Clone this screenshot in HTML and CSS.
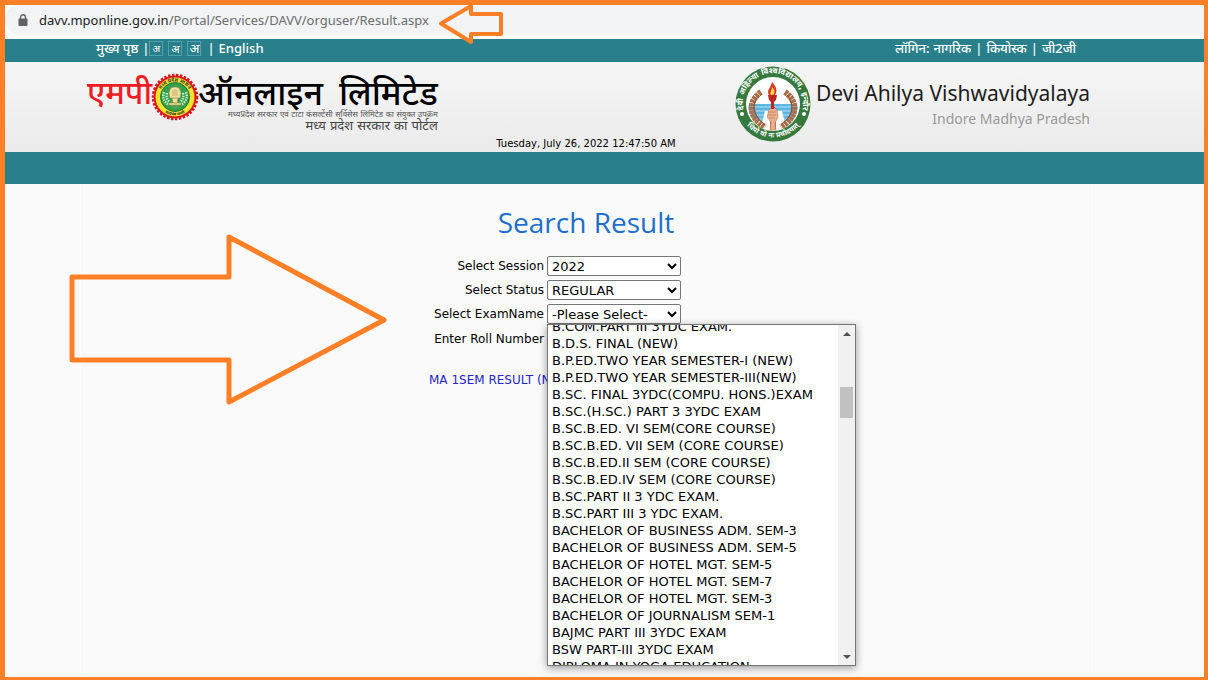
FILE: index.html
```
<!DOCTYPE html>
<html lang="en">
  <head>
    <meta charset="UTF-8">
    <title>Search Result</title>
    <link rel="stylesheet" href="styles.css">
  </head>
  <body>
    <!-- address bar -->
    <div class="address-bar">
      <svg class="lock" width="10" height="12" viewBox="0 0 10 12">
        <path d="M2.5 5V3.2a2.5 2.5 0 0 1 5 0V5" fill="none" stroke="#5f6368" stroke-width="1.4"/>
        <rect x="0.5" y="4.5" width="9" height="7.5" rx="1" fill="#5f6368"/>
      </svg>
      <div class="url">davv.mponline.gov.in<span>/Portal/Services/DAVV/orguser/Result.aspx</span></div>
    </div>

    <!-- language and login links -->
    <div class="top-bar">
      <div class="container top-links">
        <div class="link-group">
          <a href="#" lang="hi">मुख्य पृष्ठ</a>
          <span>|</span>
          <div class="text-sizes">
            <button class="size-button small">अ</button>
            <button class="size-button medium">अ</button>
            <button class="size-button large">अ</button>
          </div>
          <span>|</span>
          <a href="#">English</a>
        </div>
        <div class="link-group login" lang="hi">
          <span>लॉगिन:</span>
          <a href="#">नागरिक</a>
          <span>|</span>
          <a href="#">कियोस्क</a>
          <span>|</span>
          <a href="#">जी2जी</a>
        </div>
      </div>
    </div>

    <header class="header">
      <div class="container brands">
        <div class="portal" lang="hi">
          <div class="portal-name">
            <span class="red">एमपी</span>
            <svg class="emblem" width="48" height="48" viewBox="0 0 48 48">
              <circle cx="24" cy="24" r="21.5" fill="#e0161f"/>
              <circle cx="24" cy="24" r="22" fill="none" stroke="#d8141c" stroke-width="2.6" stroke-dasharray="2.4 1.6"/>
              <circle cx="24" cy="24" r="19.5" fill="#f3e32c"/>
              <path id="emblem-top" d="M8.500 24a15.500 15.500 0 0 1 31 0" fill="none"/>
              <path id="emblem-bottom" d="M5.500 24a18.500 18.500 0 0 0 37 0" fill="none"/>
              <text font-size="5" font-weight="bold" fill="#333"><textPath href="#emblem-top" startOffset="50%" text-anchor="middle">मध्य प्रदेश शासन</textPath></text>
              <text font-size="4" font-weight="bold" fill="#333"><textPath href="#emblem-bottom" startOffset="50%" text-anchor="middle">सत्यमेव जयते</textPath></text>
              <circle cx="24" cy="24" r="14.500" fill="#35a04a" stroke="#1d7a32"/>
              <g fill="none" stroke="#c9eccb" stroke-width="2.400" stroke-dasharray="1.5 1">
                <path d="M13 19c-2 5 0 10 5 13M35 19c2 5 0 10-5 13M16 20c-1 4 0 7 3 9M32 20c1 4 0 7-3 9"/>
              </g>
              <path d="M19 17c0-4 10-4 10 0l1 3-1 5H19l-1-5zM21 25h6l-1 5h-4zM18 30h12v2H18z" fill="#f0dfa1" stroke="#a08d45" stroke-width=".5"/>
              <path d="M22 17v6M24 16v7M26 17v6M20 34h8" stroke="#b39b4d" stroke-width=".7"/>
            </svg>
            <span>ऑनलाइन</span>
            <span class="last-word">लिमिटेड</span>
          </div>
          <div class="portal-note">मध्यप्रदेश सरकार एवं टाटा कंसल्टेंसी सर्विसेस लिमिटेड का संयुक्त उपक्रम</div>
          <div class="portal-tag">मध्य प्रदेश सरकार का पोर्टल</div>
        </div>

        <div class="university">
          <svg class="seal" width="76" height="76" viewBox="0 0 76 76">
            <circle cx="38" cy="38" r="37.500" fill="#36793f"/>
            <circle cx="38" cy="38" r="27" fill="#fff"/>
            <path id="seal-top" d="M9 45A30 30 0 1 1 67 45" fill="none"/>
            <path id="seal-bottom" d="M8 54A34.500 34.500 0 0 0 68 54" fill="none"/>
            <text font-size="8" font-weight="bold" fill="#fff"><textPath href="#seal-top" startOffset="50%" text-anchor="middle">देवी अहिल्या विश्वविद्यालय, इन्दौर</textPath></text>
            <text font-size="7" font-weight="bold" fill="#fff"><textPath href="#seal-bottom" startOffset="50%" text-anchor="middle">धियो यो नः प्रचोदयात्</textPath></text>
            <circle cx="7" cy="48" r="2" fill="#fff"/>
            <circle cx="69" cy="48" r="2" fill="#fff"/>
            <path d="M14 38h48q2 9-6 17H20q-8-8-6-17z" fill="#5cb5e2"/>
            <path d="M16 41h44M15 45h46M16 49h44M18 53h40" stroke="#b5def2" stroke-width="1"/>
            <path d="M27 57l3-12q5-1 8 2 4-3 9-2l3 12q-7-3-12 1-4-4-11-1z" fill="#fff"/>
            <g fill="none" stroke="#a96e49">
              <path d="M26 26C12 36 14 52 30 61M50 26c14 10 12 26-4 35" stroke-width="6" stroke-dasharray="3 .6"/>
              <path d="M24 29C16 38 18 50 30 59M52 29c8 9 6 21-6 30" stroke="#865133" stroke-width="1"/>
            </g>
            <path d="M36 41h4l1 22h-6z" fill="#b62b22"/>
            <path d="M34 44q4-5 8 0l1 7-3 6 1 7h-6l1-8-4-5z" fill="#e9b08b" stroke="#b87355" stroke-width=".6"/>
            <path d="M33 46h8M33 49h8M34 52h6" stroke="#b87355" stroke-width=".6"/>
            <path d="M33 29h9l-1 5-2 2v7h-3v-7l-2-2z" fill="#bd2521"/>
            <path d="M34 29c-3-5 2-7 3-13 4 4 6 9 3 13z" fill="#dc3924"/>
            <path d="M36 29c-2-3 1-4 1-8 3 3 3 6 1 8z" fill="#ffd44b"/>
          </svg>
          <div class="university-text">
            <div class="university-name">Devi Ahilya Vishwavidyalaya</div>
            <div class="university-place">Indore Madhya Pradesh</div>
          </div>
        </div>
      </div>
      <div class="container date">Tuesday, July 26, 2022 12:47:50 AM</div>
    </header>
    <nav class="menu-bar"></nav>

    <main class="container content">
      <h1>Search Result</h1>
      <form class="search-form">
        <label for="session">Select Session</label>
        <select id="session"><option>2022</option></select>

        <label for="status">Select Status</label>
        <select id="status"><option>REGULAR</option></select>

        <label for="exam">Select ExamName</label>
        <div class="exam-field">
          <select id="exam"><option>-Please Select-</option></select>
          <!-- opened exam list -->
          <div class="exam-popup">
            <ul class="exam-list" role="listbox" aria-label="Exam names">
              <li role="option">B.COM.PART III 3YDC EXAM.</li>
              <li role="option">B.D.S. FINAL (NEW)</li>
              <li role="option">B.P.ED.TWO YEAR SEMESTER-I (NEW)</li>
              <li role="option">B.P.ED.TWO YEAR SEMESTER-III(NEW)</li>
              <li role="option">B.SC. FINAL 3YDC(COMPU. HONS.)EXAM</li>
              <li role="option">B.SC.(H.SC.) PART 3 3YDC EXAM</li>
              <li role="option">B.SC.B.ED. VI SEM(CORE COURSE)</li>
              <li role="option">B.SC.B.ED. VII SEM (CORE COURSE)</li>
              <li role="option">B.SC.B.ED.II SEM (CORE COURSE)</li>
              <li role="option">B.SC.B.ED.IV SEM (CORE COURSE)</li>
              <li role="option">B.SC.PART II 3 YDC EXAM.</li>
              <li role="option">B.SC.PART III 3 YDC EXAM.</li>
              <li role="option">BACHELOR OF BUSINESS ADM. SEM-3</li>
              <li role="option">BACHELOR OF BUSINESS ADM. SEM-5</li>
              <li role="option">BACHELOR OF HOTEL MGT. SEM-5</li>
              <li role="option">BACHELOR OF HOTEL MGT. SEM-7</li>
              <li role="option">BACHELOR OF HOTEL MGT. SEM-3</li>
              <li role="option">BACHELOR OF JOURNALISM SEM-1</li>
              <li role="option">BAJMC PART III 3YDC EXAM</li>
              <li role="option">BSW PART-III 3YDC EXAM</li>
              <li role="option">DIPLOMA IN YOGA EDUCATION</li>
            </ul>
            <div class="scrollbar">
              <button type="button" aria-label="Scroll up"><svg width="8" height="4" viewBox="0 0 8 4"><path d="M0 4l4-4 4 4z" fill="#505050"/></svg></button>
              <div class="scroll-track"><div class="scroll-thumb"></div></div>
              <button type="button" aria-label="Scroll down"><svg width="8" height="4" viewBox="0 0 8 4"><path d="M0 0l4 4 4-4z" fill="#505050"/></svg></button>
            </div>
          </div>
        </div>

        <label for="roll">Enter Roll Number</label>
        <input type="text" id="roll">

        <a class="result-link" href="#">MA 1SEM RESULT (NEW)</a>
      </form>
    </main>

    <!-- orange pointer arrows -->
    <svg class="arrow arrow-url" width="68" height="46" viewBox="0 0 68 46">
      <path d="M5 23.500L35 6v8h30v20H35v8z"/>
    </svg>
    <svg class="arrow arrow-form" width="320" height="174" viewBox="0 0 320 174">
      <path d="M4 45h157V5l155 83-155 82v-42H4z"/>
    </svg>
  </body>
</html>
```
FILE: styles.css
```
* {
  box-sizing: border-box;
}

body {
  position: relative;
  margin: 0;
  min-height: 100vh;
  border: solid #ff7f27;
  border-width: 5px 4px 3px 5px;
  background: #fafafa;
  color: #000;
  font-family: Verdana, "DejaVu Sans", "Noto Sans", sans-serif;
  font-size: 12px;
}

a {
  color: inherit;
  text-decoration: none;
}

.container {
  margin: 0 112px 0 75px;
}

/* address bar */
.address-bar {
  display: flex;
  align-items: center;
  gap: 11px;
  height: 29px;
  margin-bottom: 5px;
  padding: 0 13px;
  background: #f1f3f4;
  border-radius: 14px 0 0 14px;
  box-shadow: 0 0 0 5px #fff;
  clip-path: inset(0 0 -5px 0);
}

.url {
  color: #202124;
  font-family: "Segoe UI", "Noto Sans", sans-serif;
  font-size: 13px;
}

.url span {
  color: #6a6e72;
}

/* top bar */
.top-bar {
  height: 23px;
  background: #29808b;
  color: #fff;
}

.top-links {
  display: flex;
  justify-content: space-between;
  height: 100%;
  padding: 0 16px;
}

.link-group {
  display: flex;
  align-items: center;
  gap: 4px;
  height: 18px;
  font-family: "Noto Sans", "Open Sans", sans-serif;
  font-size: 13px;
  font-weight: 500;
}

.text-sizes {
  display: flex;
  align-items: center;
  gap: 5px;
  margin: 0 2px 0 -4px;
}

.size-button {
  display: flex;
  align-items: center;
  justify-content: center;
  width: 14px;
  height: 15px;
  padding: 0;
  border: 1px solid #4fa3ae;
  background: none;
  color: #fff;
  font-family: inherit;
}

.small {
  font-size: 10px;
}

.medium {
  font-size: 11px;
}

.large {
  font-size: 13px;
}

/* header */
.header {
  height: 90px;
  background: linear-gradient(#f5f5f5, #ebebeb);
}

.brands {
  display: flex;
  justify-content: space-between;
  height: 76px;
  padding: 0 2px 0 7px;
}

.portal {
  padding-top: 12px;
  text-align: right;
}

.portal-name {
  display: flex;
  align-items: center;
  height: 36px;
  font-family: "Noto Sans", sans-serif;
  font-size: 34px;
  font-weight: 500;
  line-height: 36px;
}

.red {
  color: #ee1c25;
  font-size: 32px;
}

.emblem {
  margin: 10px -1px 0;
}

.last-word {
  margin-left: 16px;
}

.portal-note {
  color: #555;
  font-size: 8px;
  line-height: 10px;
}

.portal-tag {
  color: #444;
  font-size: 13px;
  line-height: 12px;
}

.university {
  display: flex;
  gap: 5px;
  padding-top: 4px;
}

.university-text {
  padding-top: 12px;
  text-align: right;
  font-family: "Noto Sans", sans-serif;
}

.university-name {
  color: #1c1c1c;
  font-size: 21px;
  line-height: 30px;
}

.university-place {
  color: #999;
  font-size: 14px;
  line-height: 22px;
}

.date {
  font-size: 10px;
  line-height: 12px;
  text-align: center;
}

.menu-bar {
  height: 32px;
  background: #29808b;
}

/* search form */
.content {
  min-height: 490px;
  padding-top: 18px;
  border: solid #fff;
  border-width: 0 1px;
}

h1 {
  margin: 0 0 14px;
  color: #1e6fcb;
  font-family: "Segoe UI", "Open Sans", sans-serif;
  font-size: 28px;
  font-weight: normal;
  line-height: 40px;
  text-align: center;
}

.search-form {
  display: grid;
  grid-template-columns: 115px 134px;
  grid-template-rows: 20px 20px 20px 22px;
  gap: 4px 3px;
  align-items: center;
  width: 314px;
  margin: 0 auto;
}

label {
  text-align: right;
  white-space: nowrap;
}

select,
input {
  display: block;
  width: 134px;
  height: 20px;
  padding: 0;
  border: 1px solid #767676;
  border-radius: 2px;
  background: #fff;
  color: #000;
  font-family: inherit;
  font-size: 13px;
}

.exam-field {
  position: relative;
}

.exam-popup {
  position: absolute;
  top: 100%;
  left: 0;
  display: flex;
  width: 309px;
  height: 342px;
  border: 1px solid #767676;
  background: #fff;
  box-shadow: 0 2px 8px rgba(0, 0, 0, 0.4);
  overflow: hidden;
}

.exam-list {
  flex: 1;
  margin: -7px 0 0;
  padding: 0 4px;
  list-style: none;
  font-size: 13px;
  line-height: 17px;
  white-space: nowrap;
}

.scrollbar {
  display: flex;
  flex-direction: column;
  width: 17px;
  background: #f1f1f1;
}

.scrollbar button {
  display: flex;
  align-items: center;
  justify-content: center;
  height: 17px;
  padding: 0;
  border: 0;
  background: none;
}

.scroll-track {
  flex: 1;
  padding: 45px 2px 0;
}

.scroll-thumb {
  height: 31px;
  background: #c1c1c1;
}

.result-link {
  grid-column: 1 / 3;
  margin-top: 16px;
  color: #2424c8;
  line-height: 20px;
  white-space: nowrap;
}

/* pointer arrows */
.arrow {
  position: absolute;
  fill: none;
  stroke: #ff7f27;
  stroke-width: 5;
  stroke-linejoin: round;
  pointer-events: none;
}

.arrow-url {
  top: -5px;
  left: 431px;
  stroke-width: 4;
}

.arrow-form {
  top: 227px;
  left: 63px;
}
```
